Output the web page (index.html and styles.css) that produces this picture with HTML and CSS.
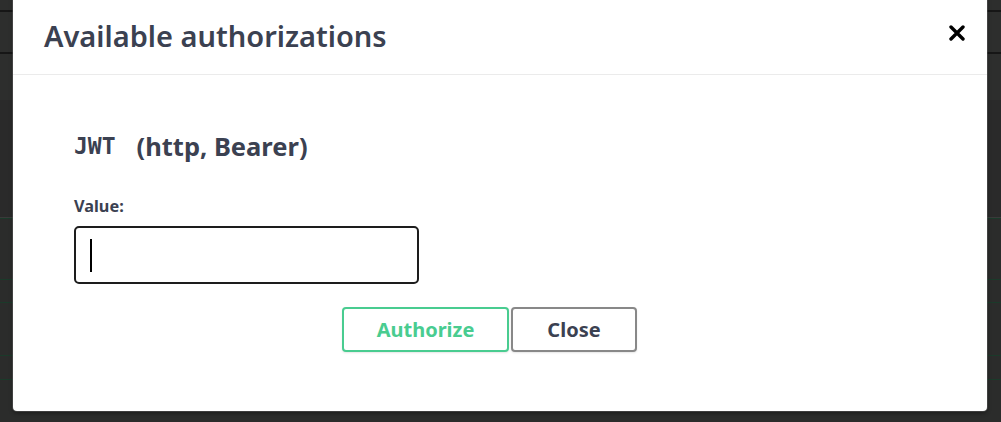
FILE: index.html
```html
<!DOCTYPE html>
<html>
<head>
<meta charset="utf-8">
<link rel="stylesheet" href="styles.css">
</head>
<body>
<div class="backdrop">
  <div class="modal">
    <div class="modal-header">
      <h3 class="modal-title">Available authorizations</h3>
      <button class="close-modal" aria-label="Close">
        <svg width="16" height="16" viewBox="0 0 16 16"><path d="M2 2 L14 14 M14 2 L2 14" stroke="#000" stroke-width="3.4" stroke-linecap="round"/></svg>
      </button>
    </div>
    <div class="modal-body">
      <h4 class="scheme"><code class="scheme-name">JWT</code><span class="scheme-type">(http, Bearer)</span></h4>
      <label class="value-label">Value:</label>
      <div class="input-box"><span class="caret"></span></div>
      <div class="btn-row">
        <button class="btn authorize">Authorize</button>
        <button class="btn close">Close</button>
      </div>
    </div>
  </div>
</div>
</body>
</html>
```
FILE: styles.css
```css
html, body {
  margin: 0;
  padding: 0;
  height: 100%;
  overflow: hidden;
}
body {
  font-family: "Noto Sans", "Open Sans", sans-serif;
  background-color: #2d2e2d;
  background-image:
    linear-gradient(to bottom,
      transparent 0, transparent 10px, #161616 10px, #161616 12px, transparent 12px,
      transparent 52px, #161616 52px, #161616 54px, transparent 54px,
      transparent 100px, #2a2a2a 100px, #2a2a2a 217px,
      #3a3a3a 217px, #3a3a3a 218px, #1b3a2a 218px, #1b3a2a 219px,
      #2b2c2b 219px, #2b2c2b 279px, #1b3a2a 279px, #1b3a2a 280px,
      #2b2c2b 280px, #2b2c2b 302px, #1b3a2a 302px, #1b3a2a 303px,
      #2b2c2b 303px, #2b2c2b 355px, #1b3a2a 355px, #1b3a2a 356px,
      #2b2c2b 356px, #2b2c2b 379px, #1b3a2a 379px, #1b3a2a 380px,
      #2b2c2b 380px);
}
.backdrop {
  display: flex;
  height: 100%;
}
.modal {
  box-sizing: border-box;
  margin: -10px 14px 11px 13px;
  flex: 1;
  background: #fff;
  border-radius: 4px;
  box-shadow: 0 0 0 1px rgba(120,120,120,0.35), 0 2px 4px rgba(0,0,0,0.4);
  display: flex;
  flex-direction: column;
}
.modal-header {
  box-sizing: border-box;
  height: 85px;
  padding: 6px 22px 0 31px;
  border-bottom: 1px solid #ebebeb;
  display: flex;
  align-items: center;
  justify-content: space-between;
}
.modal-title {
  margin: 0;
  font-size: 29px;
  font-weight: 600;
  color: #3b4151;
}
.close-modal {
  border: 0;
  background: none;
  padding: 0;
  width: 16px;
  height: 16px;
  display: flex;
  margin-top: -5px;
}
.modal-body {
  padding: 56px 0 0 61px;
  display: flex;
  flex-direction: column;
  align-items: flex-start;
}
.scheme {
  margin: 0;
  height: 30px;
  display: flex;
  align-items: center;
  color: #3b4151;
  font-size: 25.5px;
  font-weight: 700;
}
.scheme-name {
  font-family: "DejaVu Sans Mono", monospace;
  font-size: 23px;
  font-weight: 700;
  margin-right: 21px;
}
.value-label {
  margin-top: 35px;
  font-size: 16.3px;
  font-weight: 700;
  color: #3b4151;
  line-height: 20px;
}
.input-box {
  box-sizing: border-box;
  margin-top: 10px;
  width: 345px;
  height: 58px;
  border: 2px solid #1d1d1d;
  border-radius: 5px;
  display: flex;
  align-items: center;
  padding-left: 14px;
}
.caret {
  width: 2px;
  height: 33px;
  background: #000;
}
.btn-row {
  display: flex;
  gap: 2px;
  margin: 23px 0 0 268px;
}
.btn {
  box-sizing: border-box;
  height: 45px;
  border-radius: 4px;
  background: #fff;
  font-family: "Noto Sans", "Open Sans", sans-serif;
  font-size: 20px;
  font-weight: 700;
  box-shadow: 0 1px 2px rgba(0,0,0,0.1);
  padding: 0;
}
.authorize {
  width: 167px;
  border: 2px solid #49cc90;
  color: #49cc90;
}
.close {
  width: 126px;
  border: 2px solid #888;
  color: #3b4151;
}
```
